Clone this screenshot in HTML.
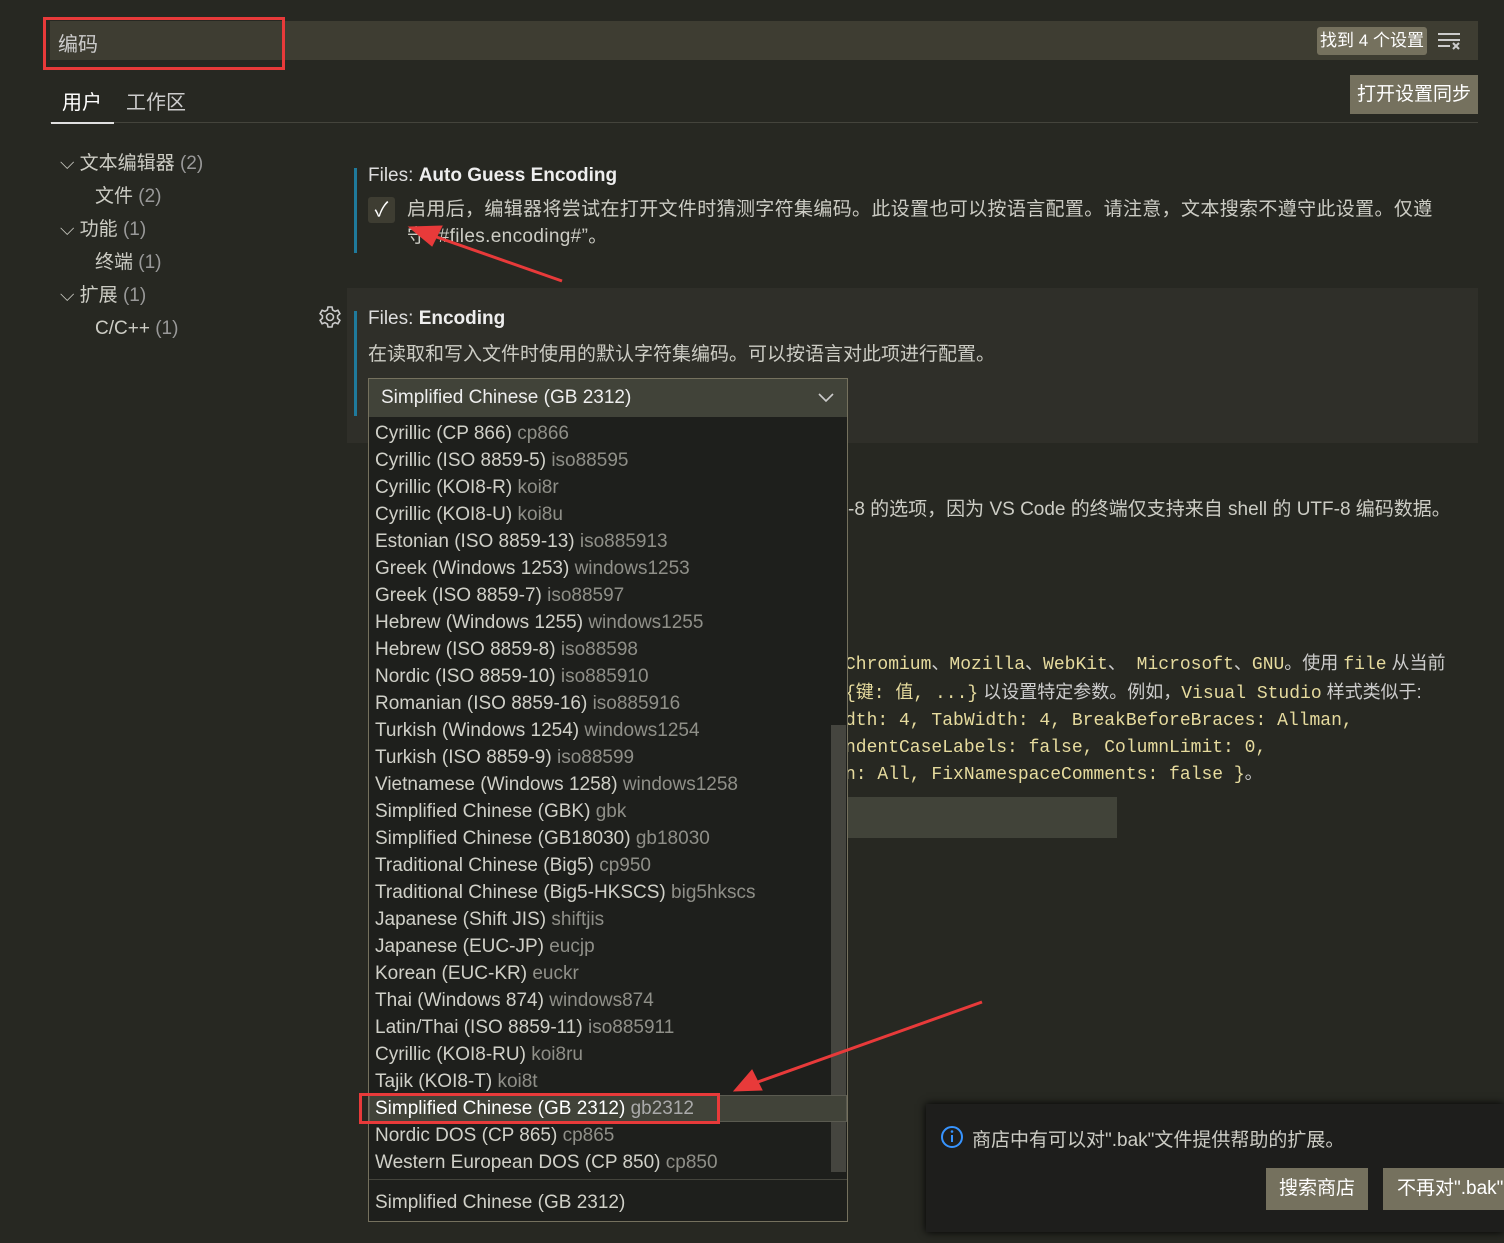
<!DOCTYPE html>
<html><head><meta charset="utf-8"><style>
*{margin:0;padding:0;box-sizing:border-box}
body{width:1504px;height:1243px;background:#272822;position:relative;overflow:hidden;font-family:"Liberation Sans","Noto Sans CJK SC",sans-serif;color:#ccccc4}
.a{position:absolute;white-space:nowrap}
.mono{font-family:"Liberation Mono","Noto Sans CJK SC",monospace;color:#e6db9e}
.item{position:absolute;left:6px;height:27px;line-height:27px;font-size:19px;color:#d0d0c8}
.item span{color:#8f8f88}
</style></head><body>
<div class="a" style="left:50px;top:21px;width:1428px;height:39px;background:#3e3d32"></div>
<div class="a" style="left:58px;top:28px;font-size:20px;color:#ccc">编码</div>
<div class="a" style="left:43px;top:17px;width:242px;height:53px;border:3px solid #e83a3a"></div>
<div class="a" style="left:1317px;top:27px;width:110px;height:28px;background:#75715e;border-radius:3px;font-size:17px;line-height:28px;text-align:center;color:#fff">找到 4 个设置</div>
<svg class="a" style="left:1436px;top:31px" width="26" height="20"><g stroke="#ccc" stroke-width="2"><line x1="2" y1="3" x2="24" y2="3"/><line x1="2" y1="9" x2="24" y2="9"/><line x1="2" y1="15" x2="14" y2="15"/><line x1="17" y1="12" x2="23" y2="18"/><line x1="23" y1="12" x2="17" y2="18"/></g></svg>
<div class="a" style="left:62px;top:86px;font-size:20px;color:#fff">用户</div>
<div class="a" style="left:126px;top:86px;font-size:20px;color:#ccc">工作区</div>
<div class="a" style="left:50px;top:122px;width:1428px;height:1px;background:#44443c"></div>
<div class="a" style="left:51px;top:122px;width:63px;height:2px;background:#e0e0e0"></div>
<div class="a" style="left:1350px;top:75px;width:128px;height:39px;background:#75715e;font-size:19px;line-height:39px;text-align:center;color:#fff">打开设置同步</div>
<div class="a" style="left:60px;top:150px;font-size:19px;line-height:28px">⌵ 文本编辑器 <span style="color:#999">(2)</span></div>
<div class="a" style="left:95px;top:183px;font-size:19px;line-height:28px">文件 <span style="color:#999">(2)</span></div>
<div class="a" style="left:60px;top:216px;font-size:19px;line-height:28px">⌵ 功能 <span style="color:#999">(1)</span></div>
<div class="a" style="left:95px;top:249px;font-size:19px;line-height:28px">终端 <span style="color:#999">(1)</span></div>
<div class="a" style="left:60px;top:282px;font-size:19px;line-height:28px">⌵ 扩展 <span style="color:#999">(1)</span></div>
<div class="a" style="left:95px;top:315px;font-size:19px;line-height:28px">C/C++ <span style="color:#999">(1)</span></div>
<div class="a" style="left:354px;top:168px;width:3px;height:85px;background:#1f7a9c"></div>
<div class="a" style="left:368px;top:165px;font-size:19px;color:#ddd">Files: <b style="color:#eee">Auto Guess Encoding</b></div>
<div class="a" style="left:368px;top:197px;width:27px;height:26px;background:#3e3d32;border-radius:3px;color:#fff;font-size:20px;text-align:center;line-height:26px">✓</div>
<div class="a" style="left:407px;top:196px;font-size:19px;line-height:27px;letter-spacing:0.35px">启用后，编辑器将尝试在打开文件时猜测字符集编码。此设置也可以按语言配置。请注意，文本搜索不遵守此设置。仅遵<br>守 “#files.encoding#”。</div>
<div class="a" style="left:347px;top:288px;width:1131px;height:155px;background:#2f2f29"></div>
<svg class="a" style="left:318px;top:305px" width="24" height="24" viewBox="0 0 24 24"><g fill="none" stroke="#ccc" stroke-width="1.6"><circle cx="12" cy="12" r="3.5"/><path d="M10 2h4l.6 3 2.5 1.4 2.8-1.1 2 3.4-2.3 2v2.6l2.3 2-2 3.4-2.8-1.1-2.5 1.4-.6 3h-4l-.6-3-2.5-1.4-2.8 1.1-2-3.4 2.3-2v-2.6l-2.3-2 2-3.4 2.8 1.1 2.5-1.4z"/></g></svg>
<div class="a" style="left:354px;top:311px;width:3px;height:105px;background:#1f7a9c"></div>
<div class="a" style="left:368px;top:308px;font-size:19px;color:#ddd">Files: <b style="color:#eee">Encoding</b></div>
<div class="a" style="left:368px;top:339px;font-size:19px">在读取和写入文件时使用的默认字符集编码。可以按语言对此项进行配置。</div>
<div class="a" style="left:848px;top:494px;font-size:19px">-8 的选项，因为 VS Code 的终端仅支持来自 shell 的 UTF-8 编码数据。</div>
<div class="a mono" style="left:845px;top:650px;font-size:18px;line-height:27px">Chromium<span style="color:#ccc">、</span>Mozilla<span style="color:#ccc">、</span>WebKit<span style="color:#ccc">、</span> Microsoft<span style="color:#ccc">、</span>GNU<span style="color:#ccc;font-family:'Liberation Sans','Noto Sans CJK SC'">。使用 </span>file<span style="color:#ccc;font-family:'Liberation Sans','Noto Sans CJK SC'"> 从当前</span><br> {键: 值, ...}<span style="color:#ccc;font-family:'Liberation Sans','Noto Sans CJK SC'"> 以设置特定参数。例如，</span>Visual Studio<span style="color:#ccc;font-family:'Liberation Sans','Noto Sans CJK SC'"> 样式类似于:</span><br>dth: 4, TabWidth: 4, BreakBeforeBraces: Allman,<br>ndentCaseLabels: false, ColumnLimit: 0,<br>n: All, FixNamespaceComments: false }<span style="color:#ccc">。</span></div>
<div class="a" style="left:848px;top:797px;width:269px;height:41px;background:#414339"></div>
<div class="a" style="left:368px;top:378px;width:480px;height:40px;background:#414339;border:1px solid #75715e;font-size:19px;line-height:38px;padding-left:12px;color:#eee">Simplified Chinese (GB 2312)</div>
<svg class="a" style="left:817px;top:390px" width="18" height="14"><path d="M2 4l7 7 7-7" fill="none" stroke="#ccc" stroke-width="1.6"/></svg>
<div class="a" style="left:368px;top:417px;width:480px;height:805px;background:#1e1f1c;border:1px solid #75715e;border-top:none">
<div class="a" style="left:462px;top:308px;width:15px;height:447px;background:#45453f"></div>
<div class="a" style="left:0;top:678px;width:478px;height:27px;background:#414339;border:1px solid #5a5a50"></div>
<div class="item" style="top:3px">Cyrillic (CP 866) <span>cp866</span></div>
<div class="item" style="top:30px">Cyrillic (ISO 8859-5) <span>iso88595</span></div>
<div class="item" style="top:57px">Cyrillic (KOI8-R) <span>koi8r</span></div>
<div class="item" style="top:84px">Cyrillic (KOI8-U) <span>koi8u</span></div>
<div class="item" style="top:111px">Estonian (ISO 8859-13) <span>iso885913</span></div>
<div class="item" style="top:138px">Greek (Windows 1253) <span>windows1253</span></div>
<div class="item" style="top:165px">Greek (ISO 8859-7) <span>iso88597</span></div>
<div class="item" style="top:192px">Hebrew (Windows 1255) <span>windows1255</span></div>
<div class="item" style="top:219px">Hebrew (ISO 8859-8) <span>iso88598</span></div>
<div class="item" style="top:246px">Nordic (ISO 8859-10) <span>iso885910</span></div>
<div class="item" style="top:273px">Romanian (ISO 8859-16) <span>iso885916</span></div>
<div class="item" style="top:300px">Turkish (Windows 1254) <span>windows1254</span></div>
<div class="item" style="top:327px">Turkish (ISO 8859-9) <span>iso88599</span></div>
<div class="item" style="top:354px">Vietnamese (Windows 1258) <span>windows1258</span></div>
<div class="item" style="top:381px">Simplified Chinese (GBK) <span>gbk</span></div>
<div class="item" style="top:408px">Simplified Chinese (GB18030) <span>gb18030</span></div>
<div class="item" style="top:435px">Traditional Chinese (Big5) <span>cp950</span></div>
<div class="item" style="top:462px">Traditional Chinese (Big5-HKSCS) <span>big5hkscs</span></div>
<div class="item" style="top:489px">Japanese (Shift JIS) <span>shiftjis</span></div>
<div class="item" style="top:516px">Japanese (EUC-JP) <span>eucjp</span></div>
<div class="item" style="top:543px">Korean (EUC-KR) <span>euckr</span></div>
<div class="item" style="top:570px">Thai (Windows 874) <span>windows874</span></div>
<div class="item" style="top:597px">Latin/Thai (ISO 8859-11) <span>iso885911</span></div>
<div class="item" style="top:624px">Cyrillic (KOI8-RU) <span>koi8ru</span></div>
<div class="item" style="top:651px">Tajik (KOI8-T) <span>koi8t</span></div>
<div class="item" style="top:678px;color:#fff">Simplified Chinese (GB 2312) <span style="color:#aaa">gb2312</span></div>
<div class="item" style="top:705px">Nordic DOS (CP 865) <span>cp865</span></div>
<div class="item" style="top:732px">Western European DOS (CP 850) <span>cp850</span></div>
<div class="a" style="left:0;top:762px;width:478px;height:1px;background:#44443c"></div>
<div class="item" style="top:771px;height:30px;line-height:30px">Simplified Chinese (GB 2312)</div>
</div>
<div class="a" style="left:359px;top:1093px;width:361px;height:31px;border:3px solid #e83a3a"></div>
<div class="a" style="left:926px;top:1104px;width:578px;height:128px;background:#1e1e1c;box-shadow:0 0 8px #000"></div>
<svg class="a" style="left:940px;top:1125px" width="24" height="24"><circle cx="12" cy="12" r="10" fill="none" stroke="#3794ff" stroke-width="2"/><line x1="12" y1="10" x2="12" y2="17" stroke="#3794ff" stroke-width="2"/><circle cx="12" cy="6.5" r="1.3" fill="#3794ff"/></svg>
<div class="a" style="left:972px;top:1125px;font-size:19px">商店中有可以对".bak"文件提供帮助的扩展。</div>
<div class="a" style="left:1266px;top:1168px;width:102px;height:42px;background:#75715e;color:#fff;font-size:19px;line-height:42px;text-align:center">搜索商店</div>
<div class="a" style="left:1383px;top:1168px;width:140px;height:42px;background:#75715e;color:#fff;font-size:19px;line-height:42px;padding-left:14px">不再对".bak"文</div>
<svg class="a" style="left:0;top:0" width="1504" height="1243"><g fill="#e83a3a" stroke="#e83a3a">
<line x1="562" y1="281" x2="428" y2="234" stroke-width="3"/><polygon points="409,227 442,226 432,246"/>
<line x1="982" y1="1002" x2="755" y2="1083" stroke-width="3"/><polygon points="734,1091 752,1070 762,1090"/></g></svg>
</body></html>
